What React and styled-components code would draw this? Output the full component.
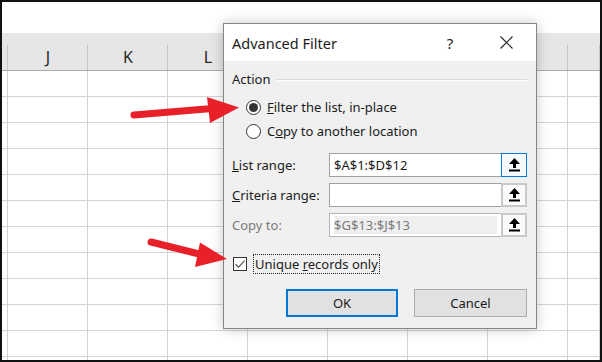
import React from "react";
import styled, { createGlobalStyle } from "styled-components";

const Global = createGlobalStyle`
  html, body { margin: 0; padding: 0; background: #fff; }
  body { font-family: "Noto Sans", "Open Sans", sans-serif; }
`;

const Frame = styled.div`
  position: relative;
  width: 602px;
  height: 362px;
  box-sizing: border-box;
  border: 2px solid #111;
  background: #fff;
  overflow: hidden;
  display: flex;
  flex-direction: column;
`;

const TopBlank = styled.div`
  height: 31px;
  flex: none;
`;

const COLS = "6px repeat(7, 80px) 1fr";

const HeaderRow = styled.div`
  flex: none;
  height: 38px;
  box-sizing: border-box;
  display: grid;
  grid-template-columns: ${COLS};
  background: #e6e6e6;
  border-bottom: 1px solid #ababab;
`;

const HeaderCell = styled.div`
  position: relative;
  display: flex;
  align-items: flex-end;
  justify-content: center;
  padding-bottom: 2px;
  font-family: "Noto Sans", sans-serif;
  font-size: 16px;
  color: #262626;
  &::after {
    content: "";
    position: absolute;
    right: 0;
    top: 12px;
    bottom: 0;
    width: 1px;
    background: #c6c6c6;
  }
`;

const GridRow = styled.div`
  flex: none;
  height: 26px;
  box-sizing: border-box;
  display: grid;
  grid-template-columns: ${COLS};
  border-bottom: 1px solid #d4d4d4;
`;

const Cell = styled.div`
  border-right: 1px solid #d4d4d4;
`;

const Dialog = styled.div`
  position: absolute;
  left: 221px;
  top: 21px;
  width: 314px;
  height: 306px;
  box-sizing: border-box;
  border: 1px solid #858585;
  background: #f0f0f0;
  box-shadow: 0 0 12px rgba(0, 0, 0, 0.22);
  display: flex;
  flex-direction: column;
  font-family: "Noto Sans", sans-serif;
  font-size: 13px;
  color: #1b1b1b;
`;

const TitleBar = styled.div`
  height: 37px;
  flex: none;
  background: #fff;
  display: flex;
  align-items: center;
  padding-left: 8px;
`;

const Title = styled.span`
  font-size: 14.5px;
  color: #1b1b1b;
  margin-right: auto;
`;

const Caption = styled.div`
  width: ${(p) => p.$w}px;
  height: 100%;
  display: flex;
  align-items: center;
  justify-content: center;
  font-size: 15px;
  color: #1b1b1b;
`;

const Body = styled.div`
  flex: 1;
  display: flex;
  flex-direction: column;
  padding: 0 9px 0 8px;
`;

const GroupHeader = styled.div`
  margin-top: 10px;
  height: 16px;
  display: flex;
  align-items: center;
  gap: 6px;
`;

const GroupLine = styled.div`
  flex: 1;
  height: 1px;
  background: #d8d8d8;
  box-shadow: 0 1px 0 #fff;
`;

const RadioRow = styled.div`
  height: 24px;
  margin-top: ${(p) => p.$mt || 0}px;
  display: flex;
  align-items: center;
  gap: 6px;
  padding-left: 14px;
`;

const Radio = styled.span`
  width: 15px;
  height: 15px;
  box-sizing: border-box;
  border-radius: 50%;
  border: 1px solid #333;
  background: #fff;
  display: flex;
  align-items: center;
  justify-content: center;
  &::after {
    content: "";
    width: 9px;
    height: 9px;
    border-radius: 50%;
    background: ${(p) => (p.$checked ? "#333" : "transparent")};
  }
`;

const FieldRow = styled.div`
  height: 24px;
  margin-top: ${(p) => p.$mt}px;
  display: flex;
  align-items: center;
`;

const FieldLabel = styled.div`
  width: 97px;
  color: ${(p) => (p.$disabled ? "#7a7a7a" : "#1b1b1b")};
`;

const FieldBox = styled.div`
  flex: 1;
  height: 24px;
  box-sizing: border-box;
  border: 1px solid ${(p) => (p.$disabled ? "#b5b5b5" : "#a2a2a2")};
  background: #fff;
  display: flex;
  align-items: stretch;
`;

const InputArea = styled.div`
  flex: 1;
  display: flex;
  align-items: center;
  padding-left: ${(p) => (p.$disabled ? 0 : 4)}px;
  margin: ${(p) => (p.$disabled ? "2px 4px 2px 4px" : "0")};
  background: ${(p) => (p.$disabled ? "#efefef" : "transparent")};
  color: ${(p) => (p.$disabled ? "#7a7a7a" : "#1b1b1b")};
`;

const RefButton = styled.div`
  width: 26px;
  box-sizing: border-box;
  margin: -1px -1px -1px 0;
  border: ${(p) => (p.$focused ? "1px solid #0078d7" : "2px solid #c9c9c9")};
  background: ${(p) => (p.$focused ? "#f4f9fd" : "#fafafa")};
  display: flex;
  align-items: center;
  justify-content: center;
`;

const CheckRow = styled.div`
  height: 20px;
  margin-top: 17px;
  display: flex;
  align-items: center;
  gap: 6px;
  padding-left: 1px;
`;

const CheckBox = styled.span`
  width: 14px;
  height: 14px;
  box-sizing: border-box;
  border: 1px solid #333;
  background: #fff;
  display: flex;
  align-items: center;
  justify-content: center;
`;

const FocusLabel = styled.span`
  height: 20px;
  box-sizing: border-box;
  border: 1px dotted #222;
  display: flex;
  align-items: center;
  padding: 0 1px;
`;

const ButtonRow = styled.div`
  margin-top: 15px;
  height: 28px;
  display: flex;
  justify-content: flex-end;
  gap: 16px;
`;

const Button = styled.div`
  width: ${(p) => p.$w}px;
  height: 28px;
  box-sizing: border-box;
  border: ${(p) => (p.$default ? "2px solid #0078d7" : "1px solid #adadad")};
  background: #e1e1e1;
  display: flex;
  align-items: center;
  justify-content: center;
`;

const Overlay = styled.svg`
  position: absolute;
  left: -2px;
  top: -2px;
  pointer-events: none;
`;

const UpIcon = () => (
  <svg width="11" height="14" viewBox="0 0 11 14">
    <path d="M5.5 0 L11 6 L7 6 L7 10 L4 10 L4 6 L0 6 Z" fill="#000" />
    <rect x="0" y="11.5" width="11" height="2" fill="#000" />
  </svg>
);

const CloseIcon = () => (
  <svg width="13" height="13" viewBox="0 0 13 13">
    <path d="M0.5 0.5 L12.5 12.5 M12.5 0.5 L0.5 12.5" stroke="#222" strokeWidth="1.1" />
  </svg>
);

const CheckIcon = () => (
  <svg width="12" height="12" viewBox="0 0 12 12">
    <path d="M1.5 6.2 L4.6 9.2 L10.6 2.6" fill="none" stroke="#555" strokeWidth="1.2" />
  </svg>
);

// Columns M–P lie under the dialog and are not visible in the picture.
const letters = ["", "J", "K", "L", "", "", "", "", ""];

export default function App() {
  return (
    <>
      <Global />
      <Frame>
        <TopBlank />
        <HeaderRow>
          {letters.map((l, i) => (
            <HeaderCell key={i}>{l}</HeaderCell>
          ))}
        </HeaderRow>
        {Array.from({ length: 12 }).map((_, r) => (
          <GridRow key={r}>
            {letters.map((_, i) => (
              <Cell key={i} />
            ))}
          </GridRow>
        ))}

        <Dialog>
          <TitleBar>
            <Title>Advanced Filter</Title>
            <Caption $w={52}>?</Caption>
            <Caption $w={60}>
              <CloseIcon />
            </Caption>
          </TitleBar>
          <Body>
            <GroupHeader>
              <span>Action</span>
              <GroupLine />
            </GroupHeader>
            <RadioRow $mt={8}>
              <Radio $checked />
              <span>
                <u>F</u>ilter the list, in-place
              </span>
            </RadioRow>
            <RadioRow>
              <Radio />
              <span>
                C<u>o</u>py to another location
              </span>
            </RadioRow>
            <FieldRow $mt={10}>
              <FieldLabel>
                <u>L</u>ist range:
              </FieldLabel>
              <FieldBox>
                <InputArea>$A$1:$D$12</InputArea>
                <RefButton $focused>
                  <UpIcon />
                </RefButton>
              </FieldBox>
            </FieldRow>
            <FieldRow $mt={6}>
              <FieldLabel>
                <u>C</u>riteria range:
              </FieldLabel>
              <FieldBox>
                <InputArea />
                <RefButton>
                  <UpIcon />
                </RefButton>
              </FieldBox>
            </FieldRow>
            <FieldRow $mt={6}>
              <FieldLabel $disabled>Copy to:</FieldLabel>
              <FieldBox $disabled>
                <InputArea $disabled>$G$13:$J$13</InputArea>
                <RefButton>
                  <UpIcon />
                </RefButton>
              </FieldBox>
            </FieldRow>
            <CheckRow>
              <CheckBox>
                <CheckIcon />
              </CheckBox>
              <FocusLabel>
                <span>
                  Unique <u>r</u>ecords only
                </span>
              </FocusLabel>
            </CheckRow>
            <ButtonRow>
              <Button $default $w={112}>OK</Button>
              <Button $w={113}>Cancel</Button>
            </ButtonRow>
          </Body>
        </Dialog>

        <Overlay width="602" height="362" viewBox="0 0 602 362">
          <line x1="134" y1="115" x2="212" y2="108.5" stroke="#e8202a" strokeWidth="7" strokeLinecap="round" />
          <polygon points="207,97 239,107.5 210,123" fill="#e8202a" />
          <line x1="151" y1="242" x2="203" y2="255" stroke="#e8202a" strokeWidth="7" strokeLinecap="round" />
          <polygon points="200,242.5 227,259 195,267" fill="#e8202a" />
        </Overlay>
      </Frame>
    </>
  );
}
